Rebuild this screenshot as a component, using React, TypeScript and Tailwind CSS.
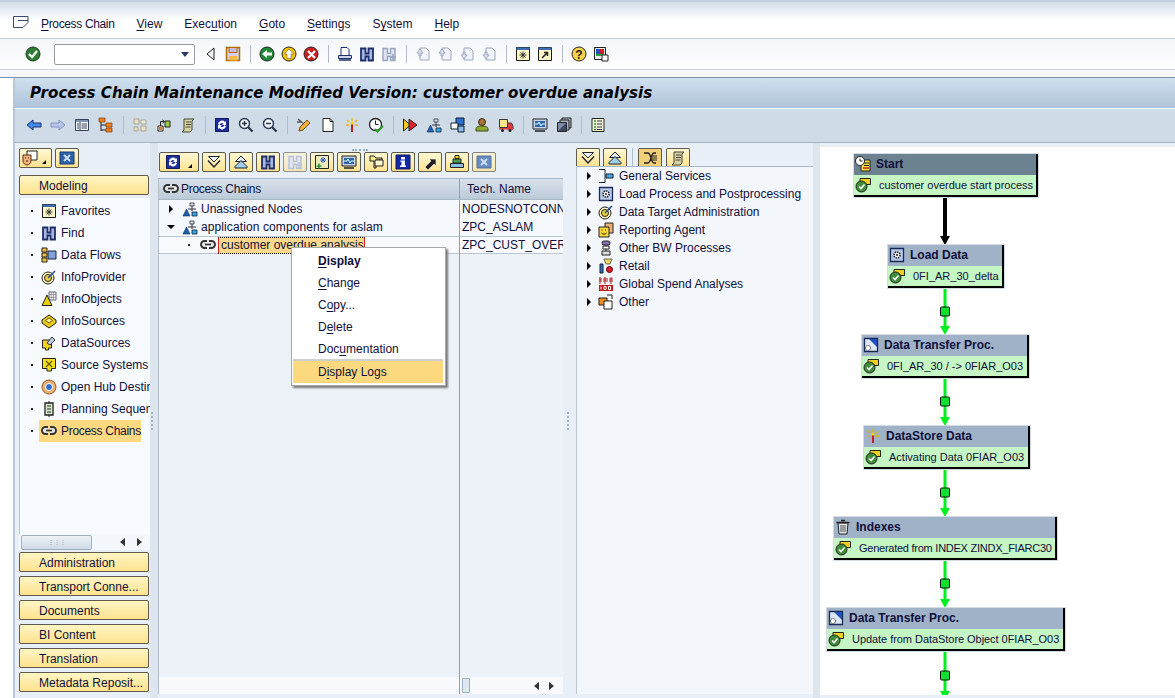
import type { ReactNode } from "react";

const NAVY = "#1c2f6b";

function Ic({ children }: { children: ReactNode }) {
  return (
    <svg viewBox="0 0 16 16" className="h-[16px] w-[16px] shrink-0">
      {children}
    </svg>
  );
}

// Toolbar / tree icons
const Check = () => (
  <Ic>
    <circle cx="8" cy="8" r="7" fill="#2f7d32" stroke="#1b3d1c" />
    <path d="M4 8l3 3 5-6" fill="none" stroke="#fff" strokeWidth="2.2" />
  </Ic>
);
const BackTri = () => (
  <Ic>
    <path d="M11 2v12L4 8z" fill="#f4f4f4" stroke="#222" />
  </Ic>
);
const Save = () => (
  <Ic>
    <path d="M1.5 1.5h13v13h-13z" fill="#d9cde8" stroke="#b56a00" strokeWidth="1.5" />
    <path d="M4 1.5h8v5H4z" fill="#c9b8dd" stroke="#b56a00" />
    <path d="M4 10h8v4.5H4z" fill="#f5b942" />
  </Ic>
);
const Circ = ({ fill, children }: { fill: string; children: ReactNode }) => (
  <Ic>
    <circle cx="8" cy="8" r="7" fill={fill} stroke="#222" />
    {children}
  </Ic>
);
const GoBack = () => (
  <Circ fill="#1f8a36">
    <path d="M3 8l5-4v2.5h5v3H8V12z" fill="#fff" />
  </Circ>
);
const GoUp = () => (
  <Circ fill="#f7c600">
    <path d="M8 3l4.5 5H10v4.5H6V8H3.5z" fill="#fff" stroke="#444" strokeWidth=".5" />
  </Circ>
);
const Cancel = () => (
  <Circ fill="#cc1f1f">
    <path d="M5 5l7 7M12 5l-7 7" stroke="#fff" strokeWidth="2.2" />
  </Circ>
);
const Print = () => (
  <Ic>
    <path d="M4 1.5h6l2 2v6H4z" fill="#fff" stroke={NAVY} />
    <path d="M1.5 9.5h13v3h-13z" fill="#cdd6e8" stroke={NAVY} />
    <path d="M2 14h12" stroke={NAVY} strokeWidth="1.5" />
  </Ic>
);
const Find = () => (
  <Ic>
    <path d="M2 2.500h4.500v5h3v-5H14v12h-4.500v-4h-3v4H2z" fill="#aab6e0" stroke={NAVY} strokeWidth="1.800" />
  </Ic>
);
const FindNext = () => (
  <Ic>
    <path d="M2 2.5h4.5v5h3v-5H14v12h-4.5v-4h-3v4H2z" fill="#dde2ee" stroke="#98a3bf" strokeWidth="1.4" />
    <path d="M9 11h6M12 8v6" stroke="#98a3bf" strokeWidth="1.5" />
  </Ic>
);
const Page = ({ up }: { up?: boolean }) => (
  <Ic>
    <path d="M5 2h6l3 3v9H5z" fill="#f1f3f9" stroke="#9ba6c0" />
    <path d={up ? "M5 3L2 7h2v3h2V7h2z" : "M5 13l-3-4h2V6h2v3h2z"} fill="#dfe4f0" stroke="#9ba6c0" />
  </Ic>
);
const Win = ({ children }: { children: ReactNode }) => (
  <Ic>
    <path d="M1.5 1.5h13v13h-13z" fill="#fdf6c8" stroke="#1a1a1a" />
    <path d="M1.5 1.5h13v2.5h-13z" fill="#3d6cb0" />
    {children}
  </Ic>
);
const Session = () => (
  <Win>
    <path d="M8 5.5v7M4.5 9h7M5.5 6.5l5 5M10.5 6.5l-5 5" stroke="#333" />
  </Win>
);
const Shortcut = () => (
  <Win>
    <path d="M5 12l5-5M7 6.5h3.5V10" fill="none" stroke="#222" strokeWidth="1.5" />
  </Win>
);
const Help = () => (
  <Circ fill="#fbd34a">
    <text x="8" y="12.5" textAnchor="middle" fontSize="12" fontWeight="700" fontFamily="Liberation Sans" fill="#222">
      ?
    </text>
  </Circ>
);
const Layout = () => (
  <Ic>
    <path d="M1.5 1.5h11v12h-11z" fill="#eee" stroke="#222" />
    <path d="M3 3h4v5H3z" fill="#2050c8" />
    <path d="M7 3h4v5H7z" fill="#d02020" />
    <path d="M3 8h8v2H3z" fill="#20a040" />
    <path d="M9 9h6v6H9z" fill="#fff" stroke="#222" />
  </Ic>
);
const ArrowL = () => (
  <Ic>
    <path d="M1 8l6-5v3h8v4H7v3z" fill="#3f8fe8" stroke={NAVY} />
  </Ic>
);
const ArrowR = () => (
  <Ic>
    <path d="M15 8L9 3v3H1v4h8v3z" fill="#b9c6ea" stroke="#8292c0" />
  </Ic>
);
const ListWin = () => (
  <Ic>
    <path d="M1.5 2.5h13v11h-13z" fill="#fff" stroke="#33405f" />
    <path d="M2 3h12v2H2z" fill="#7d93b8" />
    <path d="M6 5v8M3 7h2M3 9h2M3 11h2M7.5 7H13M7.5 9H13M7.5 11H13" stroke="#33405f" />
  </Ic>
);
const TreeIc = () => (
  <Ic>
    <path d="M3 4v10M3 8h5M3 13h5" stroke="#222" />
    <path d="M1 1h6v4H1zM8 6h6v4H8zM8 11h6v4H8z" fill="#f08020" stroke="#7a3b00" strokeWidth=".7" />
  </Ic>
);
const Squares = () => (
  <Ic>
    <path d="M2 2h5v5H2zM9 9h5v5H9zM2 10h4v4H2z" fill="#e6e0c8" stroke="#a8a38d" />
    <path d="M9 3h5v4H9z" fill="#eee" stroke="#a8a38d" />
  </Ic>
);
const Flow = () => (
  <Ic>
    <path d="M2 9h5v5H2z" fill="#fff" stroke="#222" />
    <path d="M9 4h5v6H9z" fill="#9ecb4a" stroke="#222" />
    <path d="M4.5 9V4.5H8M6.5 3l2 1.500-2 1.500" fill="none" stroke="#222" />
    <path d="M3 10h3v3H3z" fill="#f08020" />
  </Ic>
);
const Scroll = () => (
  <Ic>
    <path d="M4 2h10l-2 2v9l-2 2H2l2-2z" fill="#d9d2a8" stroke="#45452f" />
    <path d="M6 5h5M6 7.500h5M5.500 10h5" stroke="#45452f" />
  </Ic>
);
const Refresh = () => (
  <Ic>
    <path d="M1.500 1.500h13v13h-13z" fill="#1c2f9c" stroke="#0e1a5c" />
    <path d="M4 7a4 4 0 0 1 7-2l1-1v4H8l1.500-1.500A2.500 2.500 0 0 0 5.500 8zM12 9a4 4 0 0 1-7 2l-1 1V8h4L6.500 9.500A2.500 2.500 0 0 0 10.500 8z" fill="#fff" />
  </Ic>
);
const Zoom = ({ plus }: { plus?: boolean }) => (
  <Ic>
    <circle cx="6.500" cy="6.500" r="5" fill="#eef2f8" stroke="#2b3650" strokeWidth="1.400" />
    <path d="M10 10l4.500 4.500" stroke="#2b3650" strokeWidth="2.200" />
    <path d={plus ? "M4 6.500h5M6.500 4v5" : "M4 6.500h5"} stroke="#2b3650" strokeWidth="1.400" />
  </Ic>
);
const Pencil = () => (
  <Ic>
    <path d="M3 14l1-4 7-7 3 3-7 7z" fill="#f4b13a" stroke="#6b4c12" />
    <path d="M2 2l6 5M1 5h4" stroke="#555" strokeWidth="1.300" />
  </Ic>
);
const BlankDoc = () => (
  <Ic>
    <path d="M3 1.500h7l3 3v10H3z" fill="#fff" stroke="#222" />
    <path d="M10 1.500v3h3" fill="none" stroke="#222" />
  </Ic>
);
const Wand = () => (
  <Ic>
    <path d="M8 7v8" stroke="#c02020" strokeWidth="2" />
    <path d="M8 1v3M3 3l2 2M13 3l-2 2M2 8h3M11 8h3" stroke="#e8b000" strokeWidth="1.300" />
    <circle cx="8" cy="6" r="1.500" fill="#ffd800" />
  </Ic>
);
const ClockCheck = () => (
  <Ic>
    <circle cx="7.500" cy="7.500" r="6" fill="#fff" stroke="#222" strokeWidth="1.300" />
    <path d="M7.500 3.500v4h3" fill="none" stroke="#222" />
    <path d="M7 12l2.500 2.500L15 9" fill="none" stroke="#2f9a2f" strokeWidth="2" />
  </Ic>
);
const Exec = () => (
  <Ic>
    <path d="M1.500 2l7 6-7 6z" fill="#f6c821" stroke="#222" />
    <path d="M7 2l8 6-8 6z" fill="#d9222a" stroke="#222" />
  </Ic>
);
const Hier = () => (
  <Ic>
    <path d="M1 15l3.500-7L8 15z" fill="#1d5fa8" stroke="#0f2e59" strokeWidth=".6" />
    <path d="M8 2h4v3H8z" fill="#d4dbe8" stroke="#334" strokeWidth=".8" />
    <path d="M10 5v5M6 8h8" stroke="#334" />
    <path d="M10 11h5v4h-5z" fill="#31a4e8" stroke="#123" strokeWidth=".8" />
  </Ic>
);
const BlueWins = () => (
  <Ic>
    <path d="M6 1h8v7H6z" fill="#2a6fd0" stroke="#123" />
    <path d="M1 6h7v6H1z" fill="#fff" stroke="#123" />
    <path d="M8 9h6v6H8z" fill="#8ab6ee" stroke="#123" />
  </Ic>
);
const Person = () => (
  <Ic>
    <circle cx="8" cy="5" r="3.500" fill="#a8703a" stroke="#3f2a14" />
    <path d="M2 14v-2c0-2 2-3 6-3s6 1 6 3v2z" fill="#8ea832" stroke="#3f4a14" />
  </Ic>
);
const Truck = () => (
  <Ic>
    <path d="M1.500 2.500h8v8h-8z" fill="#f9e58a" stroke="#3a3a3a" />
    <path d="M9.500 6h4l1.500 3v3h-5.500z" fill="#e03a3a" stroke="#3a3a3a" />
    <path d="M1 11h14v1.500H1z" fill="#e03a3a" />
    <circle cx="4.500" cy="13.500" r="1.500" fill="#222" />
    <circle cx="12" cy="13.500" r="1.500" fill="#222" />
  </Ic>
);
const Monitor = () => (
  <Ic>
    <path d="M1 2h14v10H1z" fill="#c9d4e6" stroke="#222" />
    <path d="M3 4h10v6H3z" fill="#2c66a8" />
    <path d="M3 7h3l1-2 2 4 1-2h3" fill="none" stroke="#dff" />
    <path d="M3 14h10" stroke="#222" strokeWidth="1.500" />
  </Ic>
);
const Docs = () => (
  <Ic>
    <path d="M6 1h9v10H6z" fill="#aeb6c6" stroke="#222" />
    <path d="M4 3h9v10H4z" fill="#aeb6c6" stroke="#222" />
    <path d="M1.500 5.500h9v9h-9z" fill="#7a8ba8" stroke="#222" />
    <path d="M2 14l8-8v8z" fill="#3d4a63" />
  </Ic>
);
const ListIc = () => (
  <Ic>
    <path d="M2 1.500h12v13H2z" fill="#f9f7d9" stroke="#222" />
    <path d="M4 4h2M4 7h2M4 10h2M4 12.500h2" stroke="#2a9a3c" strokeWidth="1.500" />
    <path d="M7 4h5M7 7h5M7 10h5M7 12.500h5" stroke="#334" />
  </Ic>
);
const Chain = () => (
  <Ic>
    <path d="M7 4H4.500a3.500 3.500 0 0 0 0 7H7M9 4h2.500a3.500 3.500 0 0 1 0 7H9" fill="#e8e8e8" stroke="#333" strokeWidth="1.900" />
    <path d="M5 7.500h6" stroke="#333" strokeWidth="1.700" />
  </Ic>
);
const DataFlows = () => (
  <Ic>
    <path d="M1 1h5v4H1zM1 11h5v4H1zM1 6h5v4H1z" fill="#f0c040" stroke="#222" />
    <path d="M7 4h8v8H7z" fill="#7ea2dc" stroke="#223" />
  </Ic>
);
const Target = () => (
  <Ic>
    <circle cx="7" cy="9" r="6" fill="#fff5c0" stroke="#222" />
    <circle cx="7" cy="9" r="3.500" fill="#f4d03f" stroke="#222" />
    <path d="M7 9l7-7" stroke="#2a4f9a" strokeWidth="1.600" />
  </Ic>
);
const InfoObj = () => (
  <Ic>
    <path d="M8 1h7v8H8z" fill="#fff" stroke="#667" />
    <path d="M10.300 1v8M12.600 1v8M8 3.600h7M8 6.300h7" stroke="#667" strokeWidth=".6" />
    <path d="M1 14.500L6 4l5 10.500z" fill="#e8d000" stroke="#222" />
  </Ic>
);
const InfoSrc = () => (
  <Ic>
    <path d="M8 2l7 5v3l-7 5-7-5V7z" fill="#e9c919" stroke="#222" />
    <path d="M8 5l3.500 2.500L8 10 4.500 7.500z" fill="#fff2a0" stroke="#6b5a00" />
  </Ic>
);
const DataSrc = () => (
  <Ic>
    <path d="M1.500 5h9v8h-3v2h-3v-2h-3z" fill="#f2d21c" stroke="#222" />
    <path d="M6 8l5-6 3 3-5 5z" fill="#bdcde8" stroke="#334" />
  </Ic>
);
const SrcSys = () => (
  <Ic>
    <path d="M1.500 1.500h13v10h-4V14H6v-2.500H1.500z" fill="#f2de1c" stroke="#222" />
    <path d="M5 4l6 6M11 4l-6 6" stroke="#6b5a00" strokeWidth="1.300" />
  </Ic>
);
const OpenHub = () => (
  <Ic>
    <circle cx="8" cy="8" r="7" fill="#f0b070" stroke="#8a5a2a" />
    <circle cx="8" cy="8" r="3.500" fill="#2a6fd0" stroke="#fff" />
  </Ic>
);
const PlanSeq = () => (
  <Ic>
    <path d="M8 0v2M8 14v2" stroke="#222" />
    <path d="M4 2h8v12H4z" fill="#d9ecc9" stroke="#222" strokeWidth="1.300" />
    <path d="M6 5h4M6 8h4M6 11h4" stroke="#222" />
  </Ic>
);
const Mask = () => (
  <Ic>
    <path d="M5 1h10v9H5z" fill="#fff" stroke="#222" />
    <path d="M1 5h8v6c0 2-2 4-4 4s-4-2-4-4z" fill="#f0b080" stroke="#5a3010" />
    <path d="M3 8h1M6 8h1M4 11h2" stroke="#222" />
  </Ic>
);
const CloseX = () => (
  <Ic>
    <path d="M1 2h14v12H1z" fill="#2d62ad" stroke="#1a3a70" />
    <path d="M5 5l6 6M11 5l-6 6" stroke="#cfe0f5" strokeWidth="1.800" />
  </Ic>
);
const ExpandAll = () => (
  <Ic>
    <path d="M2.500 2.500h11L8 8z" fill="#eaf2fa" stroke="#223" />
    <path d="M2 6.500l6 6.500 6-6.500" fill="none" stroke="#223" strokeWidth="1.400" />
  </Ic>
);
const CollapseAll = () => (
  <Ic>
    <path d="M8 2l5.500 5.500h-11z" fill="#eaf2fa" stroke="#223" />
    <path d="M8 6.500l6 6v1.500H2v-1.500z" fill="#9fd0ea" stroke="#223" />
  </Ic>
);
const Wizard = () => (
  <Ic>
    <path d="M1.500 1.500h13v13h-13z" fill="#efe9bc" stroke="#222" />
    <path d="M9 3v6M6 6h6M7 4l4 4M11 4L7 8" stroke="#3060c0" />
    <path d="M2.500 12h5M5 9.500v5" stroke="#2a9a3c" strokeWidth="1.600" />
  </Ic>
);
const Tag = () => (
  <Ic>
    <path d="M2 2h4l2 2h6v2H8v8H6V7H2z" fill="#f8e88a" stroke="#222" />
    <path d="M7 6h8v6H7z" fill="#fff8d0" stroke="#222" />
  </Ic>
);
const Info = () => (
  <Ic>
    <path d="M1 1h14v14H1z" fill="#1228a8" stroke="#0a1660" />
    <path d="M6 3h4v2.500H6zM5.500 6.500H10V11.500h1V13H5v-1.500h1.500v-3.500h-1z" fill="#fff" />
  </Ic>
);
const Jump = () => (
  <Ic>
    <path d="M3 13l6-6-2-2h7v7l-2-2-6 6z" fill="#222" stroke="#fff" strokeWidth=".6" />
  </Ic>
);
const Stack = () => (
  <Ic>
    <path d="M6 1.500h4v3H6z" fill="#f2d21c" stroke="#222" />
    <path d="M4 5h8v4H4z" fill="#4aa05a" stroke="#222" />
    <path d="M1.500 9.500h13v4h-13z" fill="#8fbfe0" stroke="#222" />
  </Ic>
);
const ChainCfg = () => (
  <Ic>
    <path d="M2 3h4c3 0 3 10 6 10h2M2 13h4c3 0 3-10 6-10h2" fill="none" stroke="#222" strokeWidth="1.300" />
    <path d="M10 6h5M10 8h5M10 10h5" stroke="#222" />
  </Ic>
);
const GenSvc = () => (
  <Ic>
    <path d="M1 1.500h6v3M1 14.500h6v-3M7 4.500V11.500" fill="none" stroke="#222" />
    <path d="M8 6h7v4H8z" fill="#4aa8e8" stroke="#123" />
  </Ic>
);
const GearWin = () => (
  <Ic>
    <path d="M1.500 1.500h13v13h-13z" fill="#b6c8ea" stroke="#1a2a55" strokeWidth="1.300" />
    <circle cx="8" cy="8" r="3" fill="#fff" stroke="#222" strokeWidth="1.500" strokeDasharray="1.500 .8" />
    <circle cx="8" cy="8" r="1" fill="#222" />
  </Ic>
);
const Report = () => (
  <Ic>
    <path d="M7 1h8v10H7z" fill="#f0b070" stroke="#222" />
    <path d="M1 5h10v10H1z" fill="#f8d838" stroke="#222" />
    <path d="M3.500 8h1M7 8h1M3.500 11c1 1.500 4 1.500 5 0" fill="none" stroke="#222" />
  </Ic>
);
const OtherBw = () => (
  <Ic>
    <path d="M8 4v9" stroke="#222" />
    <rect x="4" y="1" width="8" height="4" rx="2" fill="#8a6fb8" stroke="#222" />
    <path d="M5 6h6v3H5z" fill="#fff" stroke="#222" />
    <path d="M4 11h8v4H4z" fill="#ddd" stroke="#222" />
  </Ic>
);
const RetailIc = () => (
  <Ic>
    <path d="M2 6h3v9H2z" fill="#2a70c8" stroke="#123" />
    <path d="M6 1h8l-2 5h-4z" fill="#f0d860" stroke="#665" />
    <circle cx="11.500" cy="11.500" r="3" fill="#d82030" stroke="#600" />
  </Ic>
);
const Spend = () => (
  <Ic>
    <path d="M2 1v7M1 3h3M1 5h3M7 1v7M5 3h5M5 5h5M13 1v7M11 3h4M11 5h4" stroke="#b02020" />
    <path d="M1 9h14v6H1z" fill="#c81818" />
    <path d="M3 10.500v3M6 10.500h2v3H6zM10.500 10.500h2v3h-2z" fill="none" stroke="#fff" />
  </Ic>
);
const OtherIc = () => (
  <Ic>
    <path d="M1 4h8v7H1z" fill="#f09020" stroke="#222" />
    <path d="M6 7h8v8H6z" fill="#fff" stroke="#222" />
    <path d="M9 1h5v4" fill="none" stroke="#222" />
  </Ic>
);
const StatusOk = () => (
  <Ic>
    <path d="M5 1.500h10.500v6H11L9 5.500H5z" fill="#f0d020" stroke="#222" />
    <circle cx="6.500" cy="9.500" r="5.500" fill="#3f8f3a" stroke="#222" />
    <path d="M4 9.500l2 2 3.500-4" fill="none" stroke="#fff" strokeWidth="1.600" />
  </Ic>
);
const StartIc = () => (
  <Ic>
    <path d="M6 4h9v11H6z" fill="#f6e23a" stroke="#222" />
    <path d="M8 12h6" stroke="#d02020" strokeWidth="1.500" />
    <path d="M9 7h5M9 9.500h5" stroke="#222" />
    <circle cx="5" cy="5" r="4.500" fill="#fff" stroke="#222" />
    <path d="M5 2.500V5h2.500" fill="none" stroke="#222" />
  </Ic>
);
const DtpIc = () => (
  <Ic>
    <path d="M1.500 1.500h13v13h-13z" fill="#dde6f5" stroke="#1a2a55" strokeWidth="1.300" />
    <path d="M6 2l8 0v8z" fill="#2050c0" />
    <circle cx="5" cy="11" r="2.500" fill="#fff" stroke="#222" strokeDasharray="1 .6" />
  </Ic>
);
const Trash = () => (
  <Ic>
    <path d="M3 4h10l-1 11H4z" fill="#dfe3ea" stroke="#222" />
    <path d="M1.500 3.500h13M6 1.500h4" stroke="#222" strokeWidth="1.300" />
    <path d="M6 6v7M8 6v7M10 6v7" stroke="#555" />
  </Ic>
);

// Small bits
const TriR = () => <span className="h-0 w-0 shrink-0 border-y-[4px] border-l-[4px] border-y-transparent border-l-black" />;
const TriD = () => <span className="h-0 w-0 shrink-0 border-x-[4px] border-t-[4px] border-x-transparent border-t-black" />;
const Dot = () => <span className="h-[2px] w-[2px] shrink-0 bg-[#222]" />;
const Sep = ({ className }: { className?: string }) => <span className={`h-[18px] w-px shrink-0 bg-[#aebccb] ${className ?? ""}`} />;
const Grip = () => <span className="h-[18px] w-0 border-l-2 border-dotted border-[#a4b3c3]" />;
const U = ({ children }: { children: ReactNode }) => <span className="underline underline-offset-2">{children}</span>;

function YellowBtn({ children, className }: { children: ReactNode; className?: string }) {
  return (
    <div className={`flex items-center justify-center rounded-[2px] border border-[#5f5b4c] bg-gradient-to-b from-[#fff8d4] to-[#ffe28e] ${className ?? "h-[20px] w-[24px]"}`}>
      {children}
    </div>
  );
}

function NavBtn({ label }: { label: string }) {
  return (
    <div className="flex h-[20px] w-[130px] items-center whitespace-nowrap rounded-[2px] border border-[#5f5b4c] bg-gradient-to-b from-[#fff6c4] to-[#ffe28e] pl-[19px] pt-px text-[#10103a]">
      {label}
    </div>
  );
}

const leftItems = [
  { label: "Favorites", icon: <Session /> },
  { label: "Find", icon: <Find /> },
  { label: "Data Flows", icon: <DataFlows /> },
  { label: "InfoProvider", icon: <Target /> },
  { label: "InfoObjects", icon: <InfoObj /> },
  { label: "InfoSources", icon: <InfoSrc /> },
  { label: "DataSources", icon: <DataSrc /> },
  { label: "Source Systems", icon: <SrcSys /> },
  { label: "Open Hub Destination", icon: <OpenHub /> },
  { label: "Planning Sequences", icon: <PlanSeq /> },
];

const rightTree = [
  { label: "General Services", icon: <GenSvc /> },
  { label: "Load Process and Postprocessing", icon: <GearWin /> },
  { label: "Data Target Administration", icon: <Target /> },
  { label: "Reporting Agent", icon: <Report /> },
  { label: "Other BW Processes", icon: <OtherBw /> },
  { label: "Retail", icon: <RetailIc /> },
  { label: "Global Spend Analyses", icon: <Spend /> },
  { label: "Other", icon: <OtherIc /> },
];

function ChainNode({ title, text, icon, dark, textClass, className }: { title: string; text: string; icon: ReactNode; dark?: boolean; textClass?: string; className: string }) {
  return (
    <div className={`absolute h-[43px] border-b-2 border-r-2 border-black shadow-[0_0_0_1px_#d5dbe2] ${className}`}>
      <div className={`flex h-[21px] items-center gap-[5px] pb-[2px] pl-[1px] font-bold text-[#10103a] ${dark ? "bg-[#6c8290]" : "bg-[#9fb2c7]"}`}>
        {icon}
        <span>{title}</span>
      </div>
      <div className="flex h-[20px] items-center gap-[6px] whitespace-nowrap bg-[#c6f6c4] pl-[1px] text-[11px] text-[#10103a]">
        <StatusOk />
        <span className={`pl-[2px] ${textClass ?? ""}`}>{text}</span>
      </div>
    </div>
  );
}

// wires between the chain nodes, coords are relative to the canvas
function GreenWire({ y1, y2 }: { y1: number; y2: number }) {
  const mid = y1 + 24;
  return (
    <g>
      <path d={`M125 ${y1}V${y2 - 4}`} stroke="#00f020" strokeWidth="3" />
      <path d={`M120 ${y2 - 9}h10l-5 9z`} fill="#00f020" />
      <rect x="120.500" y={mid - 5} width="9" height="9" rx="1" fill="#10e030" stroke="#111" />
    </g>
  );
}

export default function App() {
  return (
    <div className="relative flex h-[698px] w-[1175px] flex-col overflow-hidden bg-white font-['Liberation_Sans',sans-serif] text-[12px] text-[#10103a]">
      {/* menu bar */}
      <div className="flex h-[39px] shrink-0 items-center border-b border-t-2 border-b-[#c4cad6] border-t-[#c3cede] bg-gradient-to-b from-[#d3dde9] via-white via-50% to-white pt-[8px]">
        <svg viewBox="0 0 16 12" className="mb-[4px] ml-[13px] h-[12px] w-[16px]">
          <path d="M.5.500h14.500v6l-5 5H.500z" fill="none" stroke="#3b4a68" />
          <path d="M5 4.500h10" stroke="#3b4a68" />
        </svg>
        <div className="ml-[12px] flex gap-[22px]">
          <span className="tracking-[-0.35px]"><U>P</U>rocess Chain</span>
          <span><U>V</U>iew</span>
          <span>Exec<U>u</U>tion</span>
          <span><U>G</U>oto</span>
          <span><U>S</U>ettings</span>
          <span>S<U>y</U>stem</span>
          <span><U>H</U>elp</span>
        </div>
      </div>

      {/* system toolbar */}
      <div className="flex h-[31px] shrink-0 items-center gap-[6px] border-b border-[#cfd2d9] bg-gradient-to-b from-[#f4f6fa] to-white pl-[25px]">
        <Check />
        <div className="ml-[7px] flex h-[21px] w-[141px] items-center justify-end rounded-[2px] border border-[#9a9a9a] bg-white pr-[5px]">
          <TriDGray />
        </div>
        <span className="ml-[2px]"><BackTri /></span>
        <Save />
        <Sep className="ml-[3px] mr-[2px]" />
        <GoBack />
        <GoUp />
        <Cancel />
        <Sep className="ml-[3px] mr-[2px]" />
        <Print />
        <Find />
        <FindNext />
        <Sep className="ml-[3px] mr-[2px]" />
        <Page up />
        <Page up />
        <Page />
        <Page />
        <Sep className="ml-[3px] mr-[2px]" />
        <Session />
        <Shortcut />
        <Sep className="ml-[3px] mr-[2px]" />
        <Help />
        <Layout />
      </div>

      <div className="h-[8px] shrink-0 border-b border-[#7f93a8] bg-[#f5f7fb]" />

      <div className="ml-[13px] flex min-h-0 flex-1 flex-col border-l-2 border-[#b9c7d6]">
        {/* title */}
        <div className="flex h-[31px] shrink-0 items-center whitespace-nowrap border-b border-white bg-gradient-to-b from-[#d0e0ef] to-[#aec3da] pl-[15px] font-['DejaVu_Sans',sans-serif] text-[15.1px] font-bold italic text-black">
          Process Chain Maintenance Modified Version: customer overdue analysis
        </div>

        {/* application toolbar */}
        <div className="flex h-[34px] shrink-0 items-center gap-[8px] border-b border-[#a3b4c5] bg-[#cfdce8] pb-[2px] pl-[11px]">
          <ArrowL />
          <ArrowR />
          <ListWin />
          <TreeIc />
          <Sep className="ml-px" />
          <Squares />
          <Flow />
          <Scroll />
          <Sep className="ml-px" />
          <Refresh />
          <Zoom plus />
          <Zoom />
          <Sep className="ml-px" />
          <Pencil />
          <BlankDoc />
          <Wand />
          <ClockCheck />
          <Sep className="ml-px" />
          <Exec />
          <Hier />
          <BlueWins />
          <Person />
          <Truck />
          <Sep className="ml-px" />
          <Monitor />
          <Docs />
          <Sep className="ml-px" />
          <ListIc />
        </div>

        {/* work area */}
        <div className="flex min-h-0 flex-1 bg-[#e8eff6]">
          {/* navigator */}
          <div className="flex w-[135px] shrink-0 flex-col pl-[4px] pt-[5px]">
            <div className="flex gap-[3px]">
              <YellowBtn className="h-[20px] w-[33px] justify-start pl-[2px]">
                <Mask />
                <span className="ml-[4px] mt-[8px] h-0 w-0 border-b-[4px] border-l-[4px] border-b-black border-l-transparent" />
              </YellowBtn>
              <YellowBtn><CloseX /></YellowBtn>
            </div>
            <div className="mt-[7px]"><NavBtn label="Modeling" /></div>
            <div className="mt-[3px] h-[336px] overflow-hidden border-l border-[#b9c7d6] bg-[#f7faff]">
              <div className="pt-[2px]">
                {leftItems.map((item) => (
                  <div key={item.label} className="flex h-[22px] items-center overflow-hidden whitespace-nowrap pl-[11px]">
                    <Dot />
                    <span className="ml-[8px]">{item.icon}</span>
                    <span className="ml-[4px]">{item.label}</span>
                  </div>
                ))}
                <div className="flex h-[22px] items-center whitespace-nowrap pl-[11px]">
                  <Dot />
                  <div className="ml-[6px] flex h-[22px] w-[102px] items-center gap-[4px] bg-[#ffd97f] pl-[2px] tracking-[-0.3px]">
                    <Chain />
                    Process Chains
                  </div>
                </div>
              </div>
            </div>
            <div className="flex h-[16px] items-center bg-[#f4f7fb] pl-[2px]">
              <div className="flex h-[15px] w-[71px] items-center justify-center rounded-[2px] border border-[#9fb0c3] bg-gradient-to-b from-[#eef2f7] to-[#cfdae6] text-[6px] leading-none text-[#8a99aa]">
                ⋮⋮⋮
              </div>
              <span className="ml-[28px] h-0 w-0 border-y-[4px] border-r-[5px] border-y-transparent border-r-[#333]" />
              <span className="ml-[12px] h-0 w-0 border-y-[4px] border-l-[5px] border-y-transparent border-l-[#333]" />
            </div>
            <div className="mt-[2px] flex flex-col gap-[4px]">
              <NavBtn label="Administration" />
              <NavBtn label="Transport Conne..." />
              <NavBtn label="Documents" />
              <NavBtn label="BI Content" />
              <NavBtn label="Translation" />
              <NavBtn label="Metadata Reposit..." />
            </div>
          </div>

          <div className="flex w-[8px] shrink-0 items-center bg-[#dde6ef] pl-px">
            <Grip />
          </div>

          {/* process chain tree */}
          <div className="relative flex w-[405px] shrink-0 flex-col pt-[9px]">
            <span className="absolute left-[194px] top-[6px] h-0 w-[16px] border-t-2 border-dotted border-[#a4b3c3]" />
            <div className="flex gap-[3px] pl-[1px]">
              <YellowBtn className="h-[20px] w-[40px] justify-start pl-[5px]">
                <Refresh />
                <span className="ml-[7px] mt-[8px] h-0 w-0 border-b-[4px] border-l-[4px] border-b-black border-l-transparent" />
              </YellowBtn>
              <YellowBtn><ExpandAll /></YellowBtn>
              <YellowBtn><CollapseAll /></YellowBtn>
              <YellowBtn><Find /></YellowBtn>
              <YellowBtn className="h-[20px] w-[24px] opacity-60"><FindNext /></YellowBtn>
              <YellowBtn><Wizard /></YellowBtn>
              <YellowBtn><Monitor /></YellowBtn>
              <YellowBtn><Tag /></YellowBtn>
              <YellowBtn><Info /></YellowBtn>
              <YellowBtn><Jump /></YellowBtn>
              <YellowBtn><Stack /></YellowBtn>
              <YellowBtn className="h-[20px] w-[24px] opacity-70"><CloseX /></YellowBtn>
            </div>
            <div className="mb-[4px] mt-[6px] flex min-h-0 flex-1 flex-col border-l border-[#b0bfce]">
              <div className="flex h-[22px] shrink-0 border-y border-[#a9b8c7] bg-gradient-to-b from-[#d8e2ec] to-[#bccad8]">
                <div className="flex w-[300px] items-center pl-[4px]">
                  <Chain />
                  <span className="ml-[2px] tracking-[-0.3px]">Process Chains</span>
                </div>
                <div className="flex flex-1 items-center border-l border-[#8fa0b1] pl-[7px]">Tech. Name</div>
              </div>
              <div className="flex min-h-0 flex-1">
                <div className="flex w-[300px] flex-col">
                  <div className="flex h-[18px] items-center whitespace-nowrap bg-[#f5f8fd] pl-[10px]">
                    <TriR />
                    <span className="ml-[9px]"><Hier /></span>
                    <span className="ml-[3px]">Unassigned Nodes</span>
                  </div>
                  <div className="flex h-[18px] items-center whitespace-nowrap bg-[#f5f8fd] pl-[8px]">
                    <TriD />
                    <span className="ml-[7px]"><Hier /></span>
                    <span className="ml-[3px] tracking-[0.1px]">application components for aslam</span>
                  </div>
                  <div className="flex h-[18px] items-center whitespace-nowrap border-y border-[#b9c6d4] bg-[#f8fafe] pl-[29px]">
                    <Dot />
                    <span className="ml-[10px]"><Chain /></span>
                    <span className="ml-[2px] flex h-[17px] w-[147px] items-center border border-dotted border-black bg-[#fcd98a] pl-[2px] [border-left-color:#d02020] [border-left-style:solid] [border-right-color:#d02020] [border-right-style:solid]">customer overdue analysis</span>
                  </div>
                  <div className="flex-1 bg-[#edf2f9]" />
                  <div className="h-[17px] bg-[#f7f9fd]" />
                </div>
                <div className="flex flex-1 flex-col overflow-hidden border-l border-[#8fa0b1]">
                  <div className="flex h-[18px] items-center overflow-hidden whitespace-nowrap bg-[#f5f8fd] pl-[2px]">NODESNOTCONNECTED</div>
                  <div className="flex h-[18px] items-center bg-[#f5f8fd] pl-[2px]">ZPC_ASLAM</div>
                  <div className="flex h-[18px] items-center overflow-hidden whitespace-nowrap border-y border-[#b9c6d4] bg-[#f8fafe] pl-[2px]">ZPC_CUST_OVERDUE</div>
                  <div className="flex-1 bg-[#edf2f9]" />
                  <div className="flex h-[17px] items-center bg-[#f7f9fd] pl-[2px]">
                    <div className="h-[15px] w-[8px] rounded-[1px] border border-[#9fb0c3] bg-[#dfe7ef]" />
                    <span className="ml-[64px] h-0 w-0 border-y-[4px] border-r-[5px] border-y-transparent border-r-[#333]" />
                    <span className="ml-[10px] h-0 w-0 border-y-[4px] border-l-[5px] border-y-transparent border-l-[#333]" />
                  </div>
                </div>
              </div>
            </div>
          </div>

          <div className="flex w-[13px] shrink-0 items-center pl-[4px]">
            <Grip />
          </div>

          {/* process types */}
          <div className="flex w-[237px] shrink-0 flex-col pt-[5px]">
            <div className="flex h-[18px] items-end">
              <YellowBtn className="h-[18px] w-[24px] rounded-b-none border-b-0"><ExpandAll /></YellowBtn>
              <YellowBtn className="ml-[3px] h-[18px] w-[24px] rounded-b-none border-b-0"><CollapseAll /></YellowBtn>
              <Sep className="mx-[5px]" />
              <YellowBtn className="h-[18px] w-[24px] rounded-b-none border-b-0 bg-none bg-[#f3cf7a]"><ChainCfg /></YellowBtn>
              <YellowBtn className="ml-[4px] h-[18px] w-[24px] rounded-b-none border-b-0"><Scroll /></YellowBtn>
            </div>
            <div className="mb-[4px] flex-1 border-l border-t border-[#b9c7d6] border-t-[#a9b8c7] bg-[#f3f7fc]">
              {rightTree.map((item) => (
                <div key={item.label} className="flex h-[18px] items-center whitespace-nowrap pl-[10px]">
                  <TriR />
                  <span className="ml-[7px]">{item.icon}</span>
                  <span className="ml-[5px]">{item.label}</span>
                </div>
              ))}
            </div>
          </div>

          <div className="w-[7px] shrink-0 bg-[#dde6ef]" />

          {/* chain canvas */}
          <div className="relative mb-[3px] mt-[4px] min-w-0 flex-1 overflow-hidden bg-white">
            <svg className="absolute left-0 top-0 h-[548px] w-[250px]" viewBox="0 0 250 548">
              <path d="M125 50v40" stroke="#000" strokeWidth="4" />
              <path d="M120 89h10l-5 9z" fill="#000" />
              <GreenWire y1={141} y2={188} />
              <GreenWire y1={231} y2={279} />
              <GreenWire y1={322} y2={370} />
              <GreenWire y1={413} y2={461} />
              <GreenWire y1={505} y2={553} />
            </svg>
            <ChainNode dark title="Start" text="customer overdue start process" icon={<StartIc />} className="left-[34px] top-[7px] w-[184px]" />
            <ChainNode title="Load Data" text="0FI_AR_30_delta" icon={<GearWin />} className="left-[68px] top-[98px] w-[116px]" />
            <ChainNode title="Data Transfer Proc." text="0FI_AR_30 / -> 0FIAR_O03" icon={<DtpIc />} className="left-[42px] top-[188px] w-[167px]" />
            <ChainNode title="DataStore Data" text="Activating Data 0FIAR_O03" icon={<Wand />} className="left-[44px] top-[279px] w-[166px]" />
            <ChainNode title="Indexes" text="Generated from INDEX ZINDX_FIARC30" textClass="tracking-[-0.25px]" icon={<Trash />} className="left-[14px] top-[370px] w-[223px]" />
            <ChainNode title="Data Transfer Proc." text="Update from DataStore Object 0FIAR_O03" textClass="tracking-[-0.05px]" icon={<DtpIc />} className="left-[7px] top-[461px] w-[238px]" />
          </div>
        </div>
      </div>

      {/* context menu */}
      <div className="absolute left-[291px] top-[247px] h-[139px] w-[155px] border border-[#a8a8a8] bg-white pb-[2px] pl-[1px] pr-[2px] pt-[2px] shadow-[2px_2px_2px_#777]">
        <div className="flex h-[22px] items-center pl-[25px] font-bold"><U>D</U>isplay</div>
        <div className="flex h-[22px] items-center pl-[25px]"><U>C</U>hange</div>
        <div className="flex h-[22px] items-center pl-[25px]">C<U>o</U>py...</div>
        <div className="flex h-[22px] items-center pl-[25px]">D<U>e</U>lete</div>
        <div className="flex h-[21px] items-center pl-[25px]">Doc<U>u</U>mentation</div>
        <div className="border-t-2 border-[#cfcfcf]" />
        <div className="flex h-[22px] items-center bg-[#fcd97f] pl-[25px]">D<U>i</U>splay Logs</div>
      </div>
    </div>
  );
}

function TriDGray() {
  return <span className="h-0 w-0 border-x-[4px] border-t-[5px] border-x-transparent border-t-[#2c3a60]" />;
}
